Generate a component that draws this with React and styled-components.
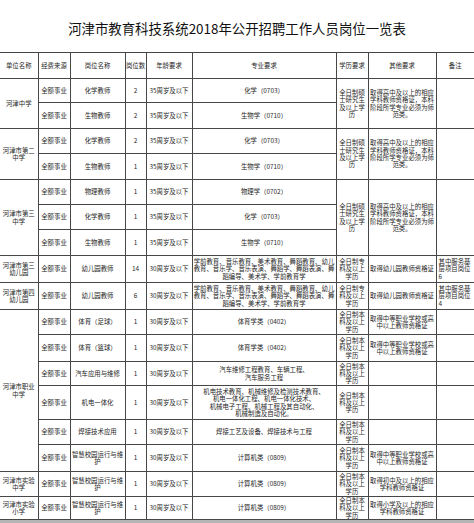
import React from "react";
import styled, { createGlobalStyle } from "styled-components";

const Global = createGlobalStyle`
  html, body { margin: 0; padding: 0; background: #fff; }
  body { font-family: "Noto Sans CJK SC", "Noto Sans", sans-serif; }
`;

const Page = styled.div`
  width: 474px;
  height: 523px;
  overflow: hidden;
  display: flex;
  flex-direction: column;
`;

const Title = styled.h1`
  margin: 0;
  height: 53px;
  display: flex;
  align-items: center;
  justify-content: center;
  font-size: 13.4px;
  font-weight: 400;
  color: #111;
  padding-top: 4px;
  box-sizing: border-box;
  letter-spacing: 0;
`;

const Table = styled.table`
  width: 474px;
  table-layout: fixed;
  border-collapse: collapse;
  border-top: 1px solid #444;
  border-bottom: 1px solid #444;
`;

const Row = styled.tr`
  height: ${(p) => p.$h}px;
`;

const Cell = styled.td`
  border-right: ${(p) => (p.$last ? "none" : "1px solid #474747")};
  border-bottom: 1px solid #474747;
  padding: 0 ${(p) => (p.$align === "left" ? "2px" : "0")};
  text-align: ${(p) => p.$align || "center"};
  vertical-align: middle;
  white-space: pre;
  font-size: 6.4px;
  line-height: 7.3px;
  color: #262626;
  overflow: visible;
`;

const HeadCell = styled(Cell).attrs({ as: "th" })`
  font-weight: 400;
`;

const Shadow = styled.div`
  height: 3px;
  background: #b5b5b5;
`;

const COLS = [38, 32, 55, 21, 46, 144, 32, 68, 38];

const GRAD = "全日制硕\n士研究生\n及以上学\n历";
const HS = "取得高中及以上的相应\n学科教师资格证，本科\n阶段所学专业必须为师\n范类。";
const BACH = "全日制本\n科及以上\n学历";
const ASSOC = "全日制专\n科及以上\n学历";
const VOC = "取得中等职业学校或高\n中以上教师资格证";
const KIDS =
  "学前教育、音乐教育、美术教育、舞蹈教育、幼儿\n教育、音乐学、音乐表演、舞蹈学、舞蹈表演、舞\n蹈编导、美术学、学前教育学";
const FUND = "全额事业";
const AGE35 = "35周岁及以下";
const AGE30 = "30周岁及以下";
const SMART = "智慧校园运行与维\n护";
const CS = "计算机类（0809）";

export default function App() {
  return (
    <Page>
      <Global />
      <Title>河津市教育科技系统2018年公开招聘工作人员岗位一览表</Title>
      <Table>
        <colgroup>
          {COLS.map((w, i) => (
            <col key={i} style={{ width: w }} />
          ))}
        </colgroup>
        <thead>
          <Row $h={26}>
            <HeadCell>单位名称</HeadCell>
            <HeadCell>经费来源</HeadCell>
            <HeadCell>岗位名称</HeadCell>
            <HeadCell>岗位数</HeadCell>
            <HeadCell>年龄要求</HeadCell>
            <HeadCell>专业要求</HeadCell>
            <HeadCell>学历要求</HeadCell>
            <HeadCell>其他要求</HeadCell>
            <HeadCell $last>备注</HeadCell>
          </Row>
        </thead>
        <tbody>
          <Row $h={24}>
            <Cell rowSpan={2}>河津中学</Cell>
            <Cell>{FUND}</Cell>
            <Cell>化学教师</Cell>
            <Cell>2</Cell>
            <Cell>{AGE35}</Cell>
            <Cell>化学（0703）</Cell>
            <Cell rowSpan={2}>{GRAD}</Cell>
            <Cell rowSpan={2}>{HS}</Cell>
            <Cell rowSpan={2} $last />
          </Row>
          <Row $h={26}>
            <Cell>{FUND}</Cell>
            <Cell>生物教师</Cell>
            <Cell>2</Cell>
            <Cell>{AGE35}</Cell>
            <Cell>生物学（0710）</Cell>
          </Row>
          <Row $h={25}>
            <Cell rowSpan={2}>{"河津市第二\n中学"}</Cell>
            <Cell>{FUND}</Cell>
            <Cell>化学教师</Cell>
            <Cell>2</Cell>
            <Cell>{AGE35}</Cell>
            <Cell>化学（0703）</Cell>
            <Cell rowSpan={2}>{GRAD}</Cell>
            <Cell rowSpan={2}>{HS}</Cell>
            <Cell rowSpan={2} $last />
          </Row>
          <Row $h={26}>
            <Cell>{FUND}</Cell>
            <Cell>生物教师</Cell>
            <Cell>1</Cell>
            <Cell>{AGE35}</Cell>
            <Cell>生物学（0710）</Cell>
          </Row>
          <Row $h={25}>
            <Cell rowSpan={3}>{"河津市第三\n中学"}</Cell>
            <Cell>{FUND}</Cell>
            <Cell>物理教师</Cell>
            <Cell>1</Cell>
            <Cell>{AGE35}</Cell>
            <Cell>物理学（0702）</Cell>
            <Cell rowSpan={3}>{GRAD}</Cell>
            <Cell rowSpan={3}>{HS}</Cell>
            <Cell rowSpan={3} $last />
          </Row>
          <Row $h={25}>
            <Cell>{FUND}</Cell>
            <Cell>化学教师</Cell>
            <Cell>1</Cell>
            <Cell>{AGE35}</Cell>
            <Cell>化学（0703）</Cell>
          </Row>
          <Row $h={26}>
            <Cell>{FUND}</Cell>
            <Cell>生物教师</Cell>
            <Cell>1</Cell>
            <Cell>{AGE35}</Cell>
            <Cell>生物学（0710）</Cell>
          </Row>
          <Row $h={27}>
            <Cell>{"河津市第三\n幼儿园"}</Cell>
            <Cell>{FUND}</Cell>
            <Cell>幼儿园教师</Cell>
            <Cell>14</Cell>
            <Cell>{AGE30}</Cell>
            <Cell>{KIDS}</Cell>
            <Cell>{ASSOC}</Cell>
            <Cell>取得幼儿园教师资格证</Cell>
            <Cell $last $align="left">{"其中服务基\n层项目岗位\n6"}</Cell>
          </Row>
          <Row $h={27}>
            <Cell>{"河津市第四\n幼儿园"}</Cell>
            <Cell>{FUND}</Cell>
            <Cell>幼儿园教师</Cell>
            <Cell>6</Cell>
            <Cell>{AGE30}</Cell>
            <Cell>{KIDS}</Cell>
            <Cell>{ASSOC}</Cell>
            <Cell>取得幼儿园教师资格证</Cell>
            <Cell $last $align="left">{"其中服务基\n层项目岗位\n4"}</Cell>
          </Row>
          <Row $h={25}>
            <Cell rowSpan={6}>{"河津市职业\n中学"}</Cell>
            <Cell>{FUND}</Cell>
            <Cell>体育（足球）</Cell>
            <Cell>1</Cell>
            <Cell>{AGE30}</Cell>
            <Cell>体育学类（0402）</Cell>
            <Cell>{BACH}</Cell>
            <Cell>{VOC}</Cell>
            <Cell $last />
          </Row>
          <Row $h={27}>
            <Cell>{FUND}</Cell>
            <Cell>体育（篮球）</Cell>
            <Cell>1</Cell>
            <Cell>{AGE30}</Cell>
            <Cell>体育学类（0402）</Cell>
            <Cell>{BACH}</Cell>
            <Cell>{VOC}</Cell>
            <Cell $last />
          </Row>
          <Row $h={24}>
            <Cell>{FUND}</Cell>
            <Cell>汽车应用与维修</Cell>
            <Cell>1</Cell>
            <Cell>{AGE30}</Cell>
            <Cell>{"汽车维修工程教育、车辆工程、\n汽车服务工程"}</Cell>
            <Cell>{BACH}</Cell>
            <Cell />
            <Cell $last />
          </Row>
          <Row $h={34}>
            <Cell>{FUND}</Cell>
            <Cell>机电一体化</Cell>
            <Cell>1</Cell>
            <Cell>{AGE30}</Cell>
            <Cell>
              {
                "机电技术教育、机械维修及检测技术教育、\n机电一体化工程、机电一体化技术、\n机械电子工程、机械工程及其自动化、\n机械制造及自动化。"
              }
            </Cell>
            <Cell>{BACH}</Cell>
            <Cell />
            <Cell $last />
          </Row>
          <Row $h={25}>
            <Cell>{FUND}</Cell>
            <Cell>焊接技术应用</Cell>
            <Cell>1</Cell>
            <Cell>{AGE30}</Cell>
            <Cell>焊接工艺及设备、焊接技术与工程</Cell>
            <Cell>{BACH}</Cell>
            <Cell />
            <Cell $last />
          </Row>
          <Row $h={27}>
            <Cell>{FUND}</Cell>
            <Cell>{SMART}</Cell>
            <Cell>1</Cell>
            <Cell>{AGE30}</Cell>
            <Cell>{CS}</Cell>
            <Cell>{BACH}</Cell>
            <Cell>{VOC}</Cell>
            <Cell $last />
          </Row>
          <Row $h={25}>
            <Cell>{"河津市实验\n中学"}</Cell>
            <Cell>{FUND}</Cell>
            <Cell>{SMART}</Cell>
            <Cell>1</Cell>
            <Cell>{AGE30}</Cell>
            <Cell>{CS}</Cell>
            <Cell>{BACH}</Cell>
            <Cell>{"取得初中及以上的相应\n学科教师资格证"}</Cell>
            <Cell $last />
          </Row>
          <Row $h={23}>
            <Cell>{"河津市实验\n小学"}</Cell>
            <Cell>{FUND}</Cell>
            <Cell>{SMART}</Cell>
            <Cell>1</Cell>
            <Cell>{AGE30}</Cell>
            <Cell>{CS}</Cell>
            <Cell>{BACH}</Cell>
            <Cell>{"取得小学及以上的相应\n学科教师资格证"}</Cell>
            <Cell $last />
          </Row>
        </tbody>
      </Table>
      <Shadow />
    </Page>
  );
}
